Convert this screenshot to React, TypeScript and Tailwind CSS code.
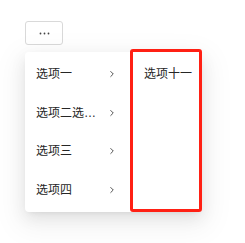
import { ChevronRight } from 'lucide-react';

const items = ['选项一', '选项二选项二', '选项三', '选项四'];

export default function App() {
  return (
    <div
      className="min-h-[243px] w-[245px] bg-white pl-[25px] pt-[21px] text-[12px] text-[#262626]"
      style={{ fontFamily: '"Liberation Sans", "Noto Sans CJK SC", sans-serif' }}
    >
      {/* trigger */}
      <button className="flex h-[24px] w-[38px] items-center justify-center rounded-[3px] border border-[#d9d9d9] bg-white">
        <svg width="11" height="3" viewBox="0 0 11 3" className="text-[#444]">
          <circle cx="1.5" cy="1.5" r="0.9" fill="currentColor" />
          <circle cx="5.5" cy="1.5" r="0.9" fill="currentColor" />
          <circle cx="9.5" cy="1.5" r="0.9" fill="currentColor" />
        </svg>
      </button>

      {/* dropdown */}
      <div className="mt-[7px] flex w-[177px] items-stretch rounded-[4px] bg-white shadow-[0_6px_16px_0_rgba(0,0,0,0.08),0_3px_6px_-4px_rgba(0,0,0,0.12),0_9px_28px_8px_rgba(0,0,0,0.05)]">
        <div className="w-[105px] py-[3px]">
          {items.map((label) => (
            <div key={label} className="flex h-[38.5px] items-center pl-[11px] pr-[13px]">
              <span className="max-w-[64px] truncate leading-none">{label}</span>
              <ChevronRight className="ml-auto h-[10px] w-[10px] shrink-0 text-[#444]" strokeWidth={2.2} />
            </div>
          ))}
        </div>

        <div className="-mt-[3px] w-[72px] rounded-[3px] border-[3px] border-[#ff2014] pt-[3px]">
          <div className="flex h-[38.5px] items-center pl-[11px]">
            <span className="leading-none">选项十一</span>
          </div>
        </div>
      </div>
    </div>
  );
}
